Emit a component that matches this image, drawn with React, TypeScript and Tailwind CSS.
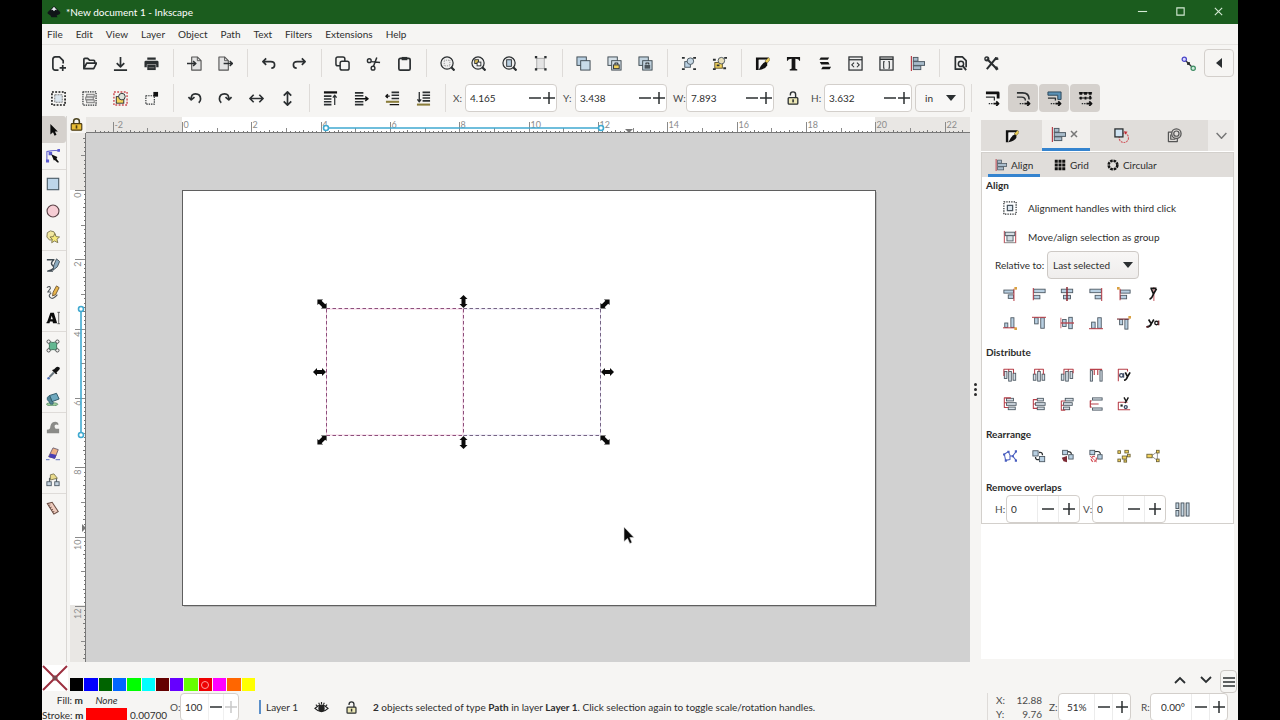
import React from "react";

const DARK = "#2b2f31";
const EDGE = "#4a5660";
const BLUE = "#b9d0e2";
const RED = "#b8404a";
const GOLD = "#f3d35c";

type Box = [number, number, number, number];

function Boxes({ at, fill = BLUE, stroke = EDGE }: { at: Box[]; fill?: string; stroke?: string }) {
  return (
    <>
      {at.map(([x, y, w, h], i) => (
        <rect key={i} x={x} y={y} width={w} height={h} fill={fill} stroke={stroke} strokeWidth="1" />
      ))}
    </>
  );
}

function L({ d, c = DARK, w = 1.8, f = "none", dash }: { d: string; c?: string; w?: number; f?: string; dash?: string }) {
  return <path d={d} stroke={c} strokeWidth={w} fill={f} strokeDasharray={dash} strokeLinejoin="round" />;
}

const frameDots = "M1 1H15V15H1Z";

const icons: Record<string, React.ReactNode> = {
  new: <L d="M8 15H4.5Q2 15 2 12.5V3.500Q2 1 4.500 1H9L13 5V8M12.500 9.500V16M9.200 12.700H16" />,
  open: <L d="M2 13V3.500Q2 2.500 3 2.500H6L8 4.500H12.500Q13.500 4.500 13.500 5.500V7M2 13.500L5 7.500H15.500L12.500 13.500Z" />,
  save: <L d="M8 1V11M4 7.500L8 11.500L12 7.500M1 15H15" />,
  print: (
    <>
      <path d="M3.500 1.500H12.500V4H3.500ZM2 5H14Q15.500 5 15.500 6.500V12H13V9H3V12H.500V6.500Q.500 5 2 5Z" fill={DARK} />
      <path d="M3.500 9.500H12.500V15H3.500Z" fill={DARK} />
      <path d="M5 12.500H11" stroke="#777" />
    </>
  ),
  importDoc: (
    <>
      <L d="M5 1H11L15 5V15H5Z" w={1.2} c="#555" f="#e4e4e4" />
      <L d="M11 1V5H15" w={1} c="#555" />
      <L d="M0 8H9M6.500 5.500L9.500 8L6.500 10.500" w={1.5} />
    </>
  ),
  exportDoc: (
    <>
      <L d="M1 1H7L11 5V15H1Z" w={1.2} c="#555" f="#e4e4e4" />
      <L d="M7 1V5H11" w={1} c="#555" />
      <L d="M6 8H15M12.500 5.500L15.500 8L12.500 10.500" w={1.5} />
    </>
  ),
  undo: <L d="M5.500 2.500L2 6L5.500 9.500M2 6H10.500Q14.500 6 14.500 9.500T11 13" />,
  redo: <L d="M10.500 2.500L14 6L10.500 9.500M14 6H5.500Q1.500 6 1.500 9.500T5 13" />,
  copy: (
    <>
      <rect x="1" y="1" width="9.500" height="9.500" rx="2" fill="none" stroke={DARK} strokeWidth="1.600" />
      <rect x="5.500" y="5.500" width="9.500" height="9.500" rx="2" fill="#f6f5f4" stroke={DARK} strokeWidth="1.600" />
    </>
  ),
  cut: (
    <>
      <circle cx="3.500" cy="5" r="2" fill="none" stroke={DARK} strokeWidth="1.500" />
      <circle cx="7.500" cy="13" r="2" fill="none" stroke={DARK} strokeWidth="1.500" />
      <L d="M5.500 6L15 7M8 11L11.500 1.500" w={1.600} />
    </>
  ),
  paste: (
    <>
      <rect x="2" y="2.500" width="12" height="12.500" rx="1.500" fill="none" stroke={DARK} strokeWidth="1.800" />
      <rect x="5" y="1" width="6" height="3.500" fill={DARK} />
    </>
  ),
  zoomSel: (
    <>
      <circle cx="7.500" cy="7.500" r="6.500" fill="#eee" stroke={DARK} strokeWidth="1.300" />
      <L d="M4.500 4.500H10.500V10.500H4.500Z" w={0.8} c="#777" dash="1 1" />
      <L d="M12 12L15.500 15.500" w={2.400} />
    </>
  ),
  zoomDraw: (
    <>
      <circle cx="7.500" cy="7.500" r="6.500" fill="#eee" stroke={DARK} strokeWidth="1.300" />
      <Boxes at={[[4, 4, 4, 4]]} fill={GOLD} stroke={DARK} />
      <Boxes at={[[6.500, 6.500, 4, 4]]} fill="#fff" stroke={DARK} />
      <L d="M12 12L15.500 15.500" w={2.400} />
    </>
  ),
  zoomPage: (
    <>
      <circle cx="7.500" cy="7.500" r="6.500" fill="#eee" stroke={DARK} strokeWidth="1.300" />
      <Boxes at={[[5, 4, 5, 7]]} fill={BLUE} stroke={DARK} />
      <L d="M12 12L15.500 15.500" w={2.400} />
    </>
  ),
  zoomCenter: (
    <>
      <rect x="4" y="2.500" width="8" height="11" fill="#e4e4e4" stroke="#aaa" />
      {[[2, 0], [12, 0], [2, 13], [12, 13]].map(([x, y]) => (
        <rect key={`${x}${y}`} x={x} y={y} width="2.500" height="2.500" fill={DARK} />
      ))}
    </>
  ),
  duplicate: (
    <>
      <Boxes at={[[1, 1, 10, 9]]} stroke="#3c4850" />
      <Boxes at={[[5, 5, 10, 10]]} stroke="#3c4850" fill="#c8dbe8" />
    </>
  ),
  clone: (
    <>
      <Boxes at={[[1, 1, 10, 9], [5, 5, 10, 10]]} stroke="#3c4850" fill="#d5e0e8" />
      <rect x="7" y="9.500" width="6" height="4" fill={GOLD} stroke={DARK} />
      <L d="M8.500 9V7.500H11.500V9" w={1.200} />
    </>
  ),
  unlinkClone: (
    <>
      <Boxes at={[[1, 1, 10, 9], [5, 5, 10, 10]]} stroke="#3c4850" fill="#c2d3df" />
      <rect x="7" y="9.500" width="6" height="4" fill="#4b555c" />
      <L d="M8.500 9V7.500H11.500V9" w={1.200} />
    </>
  ),
  group: (
    <>
      <Boxes at={[[4, 6, 6, 6]]} />
      <circle cx="10" cy="5.500" r="3.500" fill="#c5d7e4" stroke={EDGE} />
      <path d="M1 1h3v2h-3zM13 1h3v2h-3zM1 13h3v2h-3zM13 13h3v2h-3z" fill={DARK} />
    </>
  ),
  ungroup: (
    <>
      <Boxes at={[[3, 7, 8, 6]]} fill={GOLD} stroke="#5f522a" />
      <circle cx="10" cy="5" r="3.500" fill="#e8dfba" stroke={EDGE} />
      <path d="M1 3h3v2h-3zM13 1h3v2h-3zM1 13h3v2h-3zM12 12h3v2h-3zM5 9h3v2h-3z" fill={DARK} />
    </>
  ),
  fillStroke: (
    <>
      <path d="M1 1.500H14V4H1ZM1 1.500H4V15H1Z" fill="#111" />
      <path d="M4 4H12L4 14.500Z" fill="#f4f4f4" />
      <path d="M13 5L13 10Q11 14 4 15Q6 10 9 7.500Z" fill="#111" />
      <path d="M10.500 5.500L14.500 1.500L16 4L13 7.500Z" fill="#e9cc58" stroke="#5c5230" strokeWidth=".6" />
    </>
  ),
  text: <path d="M1 1H15V5H14Q13.500 3 10 3V13Q10 14 12 14V15.500H4V14Q6 14 6 13V3Q2.500 3 2 5H1Z" fill="#151515" />,
  layers: <path d="M4 1.500H13L11.500 4H2.500ZM3 6.500H12L13.500 9H4.500ZM6 11.500H15L13.500 14H4.500Z" fill="#151515" />,
  xml: (
    <>
      <rect x="1" y="1" width="14" height="14" fill="#eee" stroke={DARK} strokeWidth="1.300" />
      <path d="M1 4H15" stroke={DARK} strokeWidth="1.300" />
      <L d="M6.500 7L4 9.500L6.500 12M9.500 7L12 9.500L9.500 12" w={1.100} />
    </>
  ),
  selectors: (
    <>
      <rect x="1" y="1" width="14" height="14" fill="#eee" stroke={DARK} strokeWidth="1.300" />
      <path d="M1 3.500H15" stroke={DARK} strokeWidth="1.600" />
      <L d="M6 6H5V13H6M10 6H11V13H10" w={1.100} />
    </>
  ),
  align: (
    <>
      <path d="M1.500 0V16" stroke={RED} strokeWidth="1.300" />
      <Boxes at={[[3.500, 1.500, 5, 4], [3.500, 6, 12, 4], [3.500, 10.500, 8, 4]]} fill="#a9bccb" />
    </>
  ),
  docProps: (
    <>
      <L d="M10 14H2.500V1H10L14 5V12" w={1.800} />
      <circle cx="8.500" cy="8.500" r="2.800" fill="#f6f5f4" stroke={DARK} strokeWidth="1.600" />
      <L d="M10 10L14 15" w={2} />
    </>
  ),
  prefs: (
    <>
      <L d="M3 3L13.500 13.500M13 2L3 14" w={2.200} />
      <circle cx="3" cy="3" r="2" fill="none" stroke={DARK} strokeWidth="1.500" />
      <path d="M11 4.500L12 1L15 1.500L15.500 4ZM11 12L14 11L15.500 14L13 15.500Z" fill={DARK} />
    </>
  ),
  snap: (
    <>
      <L d="M4 4L12.500 12.500" w={1.300} />
      <circle cx="3.500" cy="3.500" r="2.300" fill="#dcdcff" stroke="#4a45c8" strokeWidth="1.300" />
      <circle cx="13" cy="13" r="2.300" fill="#cfeedd" stroke="#3d8b62" strokeWidth="1.300" />
      <rect x="6.500" y="6.500" width="3" height="3" fill={DARK} />
    </>
  ),
  selectAll: (
    <>
      <L d={frameDots} w={1.700} c="#151515" dash="2 1.500" />
      <rect x="4" y="4" width="8" height="8" fill="#dce6ee" stroke="#777" strokeDasharray="2 1" />
    </>
  ),
  selectLayers: (
    <>
      <L d={frameDots} w={1.300} dash="1.500 1" />
      <Boxes at={[[5, 3.500, 8, 3], [4, 6.500, 8, 3], [5, 9.500, 8, 3]]} fill="#e2e2e2" stroke="#777" />
    </>
  ),
  deselect: (
    <>
      <L d={frameDots} w={1.500} c="#cc4a50" dash="2 1.500" />
      <Boxes at={[[3.500, 6, 8, 7]]} fill={GOLD} stroke={DARK} />
      <circle cx="9.500" cy="6" r="3.500" fill="#dfe4dd" stroke={DARK} />
    </>
  ),
  touch: (
    <>
      <L d="M2 5H11V14H2Z" w={1.200} dash="1.500 1" />
      <rect x="10" y="1" width="5" height="5" fill="#111" />
    </>
  ),
  rotL: <L d="M1.500 6.500L4.500 9.500L8 6.500M4.500 9.500Q4 3 9 3Q14.500 3 14.500 8.500Q14.500 11 12.500 12.500" />,
  rotR: <L d="M14.500 6.500L11.500 9.500L8 6.500M11.500 9.500Q12 3 7 3Q1.500 3 1.500 8.500Q1.500 11 3.500 12.500" />,
  flipH: <L d="M1.500 8H14.500M5 4L1 8L5 12M11 4L15 8L11 12" />,
  flipV: <L d="M8 1.500V14.500M4 5L8 1L12 5M4 11L8 15L12 11" />,
  toTop: (
    <>
      <L d="M1 1.500H15" w={2.400} c="#111" />
      <L d="M1 5.500H9M1 8.500H9M1 11.500H9M1 14.500H9" w={1.700} />
      <L d="M12.500 15V5M10.500 7L12.500 4.500L14.500 7" w={1.300} />
    </>
  ),
  raise: (
    <>
      <L d="M1 2H10M1 5H10M1 11.500H10M1 14.500H10" w={1.700} />
      <L d="M1 8.300H15M12 6L15 8.300L12 10.500" w={1.500} c="#111" />
    </>
  ),
  lower: (
    <>
      <L d="M7 1.500H15M7 4.500H15M7 8H15" w={1.700} />
      <L d="M1 11.500H15" w={2.200} c="#8a7d3a" />
      <L d="M5 14.500H15M5 5.500H1M3 3.500L1 5.500L3 7.500" w={1.500} c="#111" />
    </>
  ),
  toBottom: (
    <>
      <L d="M7 1.500H15M7 4.500H15M7 7.500H15M7 10.500H15" w={1.700} />
      <L d="M1 14.500H15" w={2.200} c="#8a7d3a" />
      <L d="M3.500 1V11M1.500 9L3.500 11.500L5.500 9" w={1.400} />
    </>
  ),
  lockOpen: (
    <>
      <rect x="2.500" y="7.500" width="11" height="7.500" rx="1" fill="#ece7b4" stroke={DARK} strokeWidth="1.500" />
      <L d="M5 5V4Q5 1 8 1T11 4V7.500" w={1.600} />
      <rect x="7.200" y="9.500" width="1.800" height="3.500" fill={DARK} />
    </>
  ),
  lock: (
    <>
      <L d="M4.500 7V4Q4.500 1 8 1T11.500 4V7" w={1.900} c="#4b431f" />
      <rect x="1.500" y="7" width="13" height="8" rx="1" fill="#e9bd35" stroke="#4b3b12" strokeWidth="1.400" />
      <path d="M8 9V13" stroke="#4b3b12" strokeWidth="2" />
    </>
  ),
  scaleStroke: (
    <>
      <L d="M1 2H14V8" w={3} c="#111" />
      <L d="M1 6.500H10V10" w={1.300} />
      <L d="M4 13.500H9" w={1.500} dash="1.500 1" />
      <L d="M9 13.500H14M12 11L14.500 13.500L12 16" w={1.700} c="#111" />
    </>
  ),
  scaleRadii: (
    <>
      <L d="M1 2H7Q14 2 14 9" w={1.700} />
      <L d="M1 6.500H6Q10 6.500 10 10" w={1.500} />
      <L d="M4 13.500H9" w={1.500} dash="1.500 1" />
      <L d="M9 13.500H14M12 11L14.500 13.500L12 16" w={1.700} c="#111" />
    </>
  ),
  scaleGradient: (
    <>
      <path d="M1 1H15V9H11.500V4.500H1Z" fill="#5b91b5" stroke="#2b4558" />
      <L d="M1 7.500H9V10" w={1.400} />
      <L d="M4 13.500H9" w={1.500} dash="1.500 1" />
      <L d="M9 13.500H14M12 11L14.500 13.500L12 16" w={1.700} c="#111" />
    </>
  ),
  scalePattern: (
    <>
      <path d="M1 2H15M1 7.500H15" stroke="#111" strokeWidth="1.200" />
      <path d="M1.500 1h3v3h-3zM6.500 1h3v3h-3zM11.500 1h3v3h-3zM2 6h2v3h-2zM7 6h2v3h-2zM12 5v4h2v-4z" fill="#111" />
      <L d="M4 13.500H9" w={1.500} dash="1.500 1" />
      <L d="M9 13.500H14M12 11L14.500 13.500L12 16" w={1.700} c="#111" />
    </>
  ),
  pointer: <path d="M5 1V13L8 10.500L9.800 14.500L12 13.500L10.200 9.800H13.500Z" fill="#0b0b0b" />,
  node: (
    <>
      <L d="M1 14V3Q8 1 15 2" w={1.300} c="#6a6ad0" />
      <path d="M0 12h3.500v3.500H0zM3 3h4v4H3zM13 0h3v3h-3z" fill="#5b5bd0" />
      <path d="M6 6L13 9L12 11L15 15L13 15.500L10 12.500L9 13Z" fill="#0b0b0b" />
    </>
  ),
  rect: <rect x="1.500" y="1.500" width="13" height="13" fill="#bdd6ea" stroke="#4d5d69" strokeWidth="1.300" />,
  ellipse: <circle cx="8" cy="8" r="6.800" fill="#f6cdd4" stroke="#5c4449" strokeWidth="1.300" />,
  star: (
    <>
      <path d="M5 1L9 2L11 6L9 11L4 11.500L1 8L1.500 3Z" fill="#f2e8a0" stroke="#77704a" />
      <path d="M10 4L11.500 7.500L15.500 8L12.500 10.500L13.500 14.500L9.800 12.500L6.500 14.500L7.200 10.500L4.500 8L8.500 7.500Z" fill="#f7ea7c" stroke="#77704a" />
    </>
  ),
  pen: (
    <>
      <L d="M1 2H9Q4 6 8 9T2 15H8" w={1.700} c="#3f4a52" />
      <path d="M12 1L15.500 4L13 10L8 14L9 8Z" fill="#8cabc0" stroke="#3f4a52" />
    </>
  ),
  pencil: (
    <>
      <L d="M1 3Q5 0 5 4L2 8H5.500M6 9Q2 12 5 14.500T13 11" w={1.300} c="#50565a" />
      <path d="M12 1L15 3L11 11L7.500 12.500L8 8.500Z" fill="#e9b64c" stroke="#6a5230" />
    </>
  ),
  textTool: (
    <>
      <path d="M5 2H9L12.500 13V14H8L7.500 12H4.500L4 14H.500V13L1.500 12ZM6.500 5.500L5.300 9.500H7.800Z" fill="#0b0b0b" fillRule="evenodd" />
      <L d="M13 1.500H16M14.500 1.500V14.500M13 14.500H16" w={0.9} c="#444" />
    </>
  ),
  mesh: (
    <>
      <path d="M3 3Q8 5 13 3Q11 8 13 13Q8 11 3 13Q5 8 3 3Z" fill="#63b791" stroke="#356d53" />
      {[[3, 3], [13, 3], [3, 13], [13, 13]].map(([x, y]) => (
        <circle key={`${x}-${y}`} cx={x} cy={y} r="1.900" fill="#f2f2f2" stroke="#444" />
      ))}
    </>
  ),
  dropper: (
    <>
      <path d="M9 4L11 2Q13 0 15 1.500T14 5.500L12 7.500L13 8.500L11.500 9.500L7 5L8 4Z" fill="#111" />
      <L d="M9 7.500L4 12.500" w={2.400} c="#6c7880" />
      <circle cx="3" cy="14" r="1.500" fill="#4f6fb0" />
    </>
  ),
  bucket: (
    <>
      <ellipse cx="7" cy="14" rx="6.500" ry="1.800" fill="#9fcf9a" stroke="#5c8f6a" />
      <path d="M4 4L12 1.500L15 8L7 11Z" fill="#6fa9bf" stroke="#27505f" />
      <path d="M4 4Q0 6 1.500 9Q4 11 5 14H8Q9 12 7 11L4 4Z" fill="#4f8596" stroke="#27505f" strokeWidth=".7" />
    </>
  ),
  tweak: <path d="M1 15V11Q5 11 5 7Q6 2 11 2Q15 3 14 6Q12 4 10 6Q9 9 11 10H15V15Z" fill="#8b8b88" />,
  eraser: (
    <>
      <path d="M8 1L14 3L10 13L3 11Z" fill="#eeb187" stroke="#6a5a6c" />
      <path d="M5 7.500L12 9L10 13.500L3 11.500Z" fill="#4a3fb5" />
      <L d="M0 14.500H4M11 14.500H16" w={1} c="#4a5fb5" />
    </>
  ),
  connector: (
    <>
      <L d="M4 11V6H12V11" w={1.300} c="#5b646b" />
      <path d="M5 2L9 1L13 6L5 8Z" fill="#eadb8b" stroke="#7c7650" />
      <Boxes at={[[1, 10, 5, 4.5], [10, 10, 5, 4.5]]} fill="#c4d3df" />
    </>
  ),
  measure: (
    <>
      <path d="M1.500 3L7 1.500L14 12L9 15Z" fill="#f0cdbf" stroke="#6c4f45" strokeWidth="1.200" />
      <L d="M3 5L5 4.500M4.500 7.500L6.500 7M6 10L8 9.500M7.500 12.500L9.500 12" w={1} c="#6c4f45" />
    </>
  ),
  transform: (
    <>
      <circle cx="10.500" cy="10.500" r="5" fill="none" stroke="#d05a60" strokeWidth="1.300" strokeDasharray="2 1" />
      <rect x="1" y="1" width="8.500" height="8.500" fill="#cfe2f1" stroke={DARK} strokeWidth="1.400" />
      <path d="M10.500 3.500L14.500 4L12 7Z" fill="#c02b35" />
    </>
  ),
  offset: (
    <>
      <circle cx="10" cy="6" r="5" fill="none" stroke="#555" strokeWidth="1.400" />
      <circle cx="10" cy="6" r="2.800" fill="none" stroke="#555" strokeWidth="1.300" />
      <L d="M5 4.500H1.500V14.500H11V11M4 7V12H9" w={1.300} c="#555" />
    </>
  ),
  chevDown: <L d="M2 5L8 11.500L14 5" w={1.800} c="#777" />,
  grid: <path d="M1 1h4v4H1zM6 1h4v4H6zM11 1h4v4h-4zM1 6h4v4H1zM6 6h4v4H6zM11 6h4v4h-4zM1 11h4v4H1zM6 11h4v4H6zM11 11h4v4h-4z" fill="#111" />,
  circular: <circle cx="8" cy="8" r="5.800" fill="none" stroke="#151515" strokeWidth="3.400" strokeDasharray="3.450 1.100" />,
  handles: (
    <>
      <L d={frameDots} w={1.400} dash="1.500 1.300" />
      <rect x="5" y="5" width="6" height="6" fill="#dce6ee" stroke={EDGE} strokeWidth="1.400" />
    </>
  ),
  asGroup: (
    <>
      <L d="M1.500 1V15M14.500 1V15" w={1.100} c={RED} />
      <Boxes at={[[2.500, 2.500, 11, 4], [4.500, 6.500, 7, 6]]} fill="#d5dde3" />
      <L d="M2 14.500H14" w={1} c="#777" />
    </>
  ),
  aRightOut: (
    <>
      <Boxes at={[[1, 3.500, 11, 3.500], [6, 9, 6, 4]]} />
      <L d="M12.500 2V16" w={1.200} c={RED} />
      <rect x="13" y="0" width="3" height="3" fill="#d9a040" />
    </>
  ),
  aLeft: (
    <>
      <Boxes at={[[2, 2.500, 13, 4], [2, 9.500, 7, 4]]} />
      <L d="M1.500 1V15" w={1.200} c={RED} />
    </>
  ),
  aCenterV: (
    <>
      <Boxes at={[[1.500, 2.500, 13, 4], [4, 9.500, 8, 4]]} />
      <L d="M8 0V16" w={1.700} c="#8b2530" />
    </>
  ),
  aRight: (
    <>
      <Boxes at={[[1, 2.500, 13, 4], [7, 9.500, 7, 4]]} />
      <L d="M14.500 1V16" w={1.200} c={RED} />
    </>
  ),
  aLeftOut: (
    <>
      <Boxes at={[[4, 3.500, 11, 3.500], [4, 9.500, 7, 4]]} />
      <L d="M3.500 2V15" w={1.200} c={RED} />
      <rect x="0" y="0" width="3" height="3" fill="#d9a040" />
    </>
  ),
  aTextV: (
    <>
      <L d="M9 0V16" w={1} c={RED} />
      <L d="M6 2L8.500 8L12 2M8.500 8Q7 13 4 14M5 1.500H12" w={1.900} c="#171717" />
    </>
  ),
  aTopOut: (
    <>
      <Boxes at={[[2, 8, 3.500, 5], [9, 2, 3.500, 11]]} />
      <L d="M0 13.500H14" w={1.200} c={RED} />
      <rect x="13" y="13" width="3" height="3" fill="#d9a040" />
    </>
  ),
  aTop: (
    <>
      <Boxes at={[[3, 2, 4, 7], [10, 2, 4, 12]]} />
      <L d="M0 1.500H16" w={1.200} c={RED} />
    </>
  ),
  aMiddle: (
    <>
      <Boxes at={[[3, 4, 4, 8], [10, 1.500, 4, 13]]} />
      <L d="M1 8H16" w={1.500} c={RED} />
      <L d="M1 2V14" w={0.900} c={RED} />
    </>
  ),
  aBottom: (
    <>
      <Boxes at={[[3, 7, 4, 7], [10, 2, 4, 12]]} />
      <L d="M0 14.500H16" w={1.200} c={RED} />
    </>
  ),
  aBottomOut: (
    <>
      <Boxes at={[[3, 4, 3.500, 6], [9, 4, 3.500, 11]]} />
      <L d="M0 3.500H14" w={1.300} c="#7b3138" />
      <rect x="13" y="0" width="3" height="3" fill="#d9a040" />
    </>
  ),
  aTextH: (
    <>
      <L d="M3 4L6 9L9 4M6 9Q5 12 1 12.500" w={1.900} c="#171717" />
      <circle cx="12" cy="8" r="2" fill="none" stroke="#171717" strokeWidth="1.500" />
      <L d="M14.500 5V10.500M0 12.500H3" w={1.500} c="#6a2a30" />
    </>
  ),
  dLeft: (
    <>
      <Boxes at={[[1.500, 4, 3, 8], [6.500, 4, 3, 11], [11.500, 6, 3, 8]]} fill="#d6dfe6" />
      <L d="M1 9V1.500H12V6M6.500 1.500V4" w={1.200} c={RED} />
    </>
  ),
  dCenter: (
    <>
      <Boxes at={[[1.500, 7, 3, 7], [6.500, 4, 3, 11], [11.500, 7, 3, 7]]} fill="#d6dfe6" />
      <L d="M3 7V1.500H13V7M8 1.500V4" w={1.200} c={RED} />
    </>
  ),
  dRight: (
    <>
      <Boxes at={[[1.500, 7, 3, 7], [6.500, 4, 3, 11], [11.500, 4, 3, 8]]} fill="#d6dfe6" />
      <L d="M4.500 7V1.500H15V6M9.500 1.500V4" w={1.200} c={RED} />
    </>
  ),
  dGapH: (
    <>
      <Boxes at={[[1.500, 3, 2.500, 12], [12.500, 3, 2.500, 12]]} fill="#d6dfe6" />
      <L d="M1 1.500H15M6 2V8M10 2V8" w={1.300} c={RED} />
    </>
  ),
  dTextH: (
    <>
      <L d="M1.500 15V1.500H12V4" w={1.200} c={RED} />
      <circle cx="5" cy="8.500" r="2" fill="none" stroke="#3d4a63" strokeWidth="1.500" />
      <L d="M7.500 6V11" w={1.500} c="#3d4a63" />
      <L d="M9.500 5L12 10L15 5M12 10Q11 13.500 8 14" w={1.900} c="#171717" />
    </>
  ),
  dTop: (
    <>
      <Boxes at={[[4, 1.500, 8, 3], [4, 6.500, 11, 3], [6, 11.500, 8, 3]]} fill="#d6dfe6" />
      <L d="M9 1H1.500V12H6M1.500 6.500H4" w={1.200} c={RED} />
    </>
  ),
  dMiddle: (
    <>
      <Boxes at={[[6, 1.500, 7, 3], [4, 6.500, 11, 3], [6, 11.500, 8, 3]]} fill="#d6dfe6" />
      <L d="M6 3H1.500V13H6M1.500 8H4" w={1.200} c={RED} />
    </>
  ),
  dBottom: (
    <>
      <Boxes at={[[6, 1.500, 9, 3], [4, 6.500, 10, 3], [4, 11.500, 7, 3]]} fill="#d6dfe6" />
      <L d="M6 4.500H1.500V15H6M1.500 9.500H4" w={1.200} c={RED} />
    </>
  ),
  dGapV: (
    <>
      <Boxes at={[[4, 1, 11, 2.500], [4, 12.500, 11, 2.500]]} fill="#d6dfe6" />
      <L d="M3 4.500H1.500V11.500H3M2 8H11" w={1.400} c={RED} />
    </>
  ),
  dTextV: (
    <>
      <L d="M12 6H1.500V14.500H15" w={1.200} c={RED} />
      <L d="M8 .500L10.500 5L13 .500M10.500 5L9 7" w={1.600} c="#171717" />
      <circle cx="10" cy="11.500" r="1.700" fill="none" stroke="#3d4a63" strokeWidth="1.500" />
      <rect x="4" y="8.500" width="2.500" height="2.500" fill="#222" />
    </>
  ),
  rGraph: (
    <>
      <L d="M3 13L1.500 6L6 3L8 7V12L3 13M8 8H11L15 3M11 8L15 13" w={1.200} c="#4a5fc0" />
      <path d="M0 5h2.500v2.500H0zM2 12h2.500v2.500H2zM13.500 1.500h2.500v2.500h-2.500zM13.500 12h2.500v2.500h-2.500zM5 2h2.500v2.500H5zM10 7h2.500v2.500h-2.500z" fill="#4a5fc0" />
    </>
  ),
  rSwap: (
    <>
      <Boxes at={[[1, 2, 6, 6], [8.500, 8.500, 6, 6]]} />
      <L d="M8 4Q12 3 12 7M8 12Q4 13 4 9" w={1.500} />
    </>
  ),
  rSwapZ: (
    <>
      <Boxes at={[[3, 1.500, 5.500, 5], [10, 6.500, 5, 5]]} />
      <L d="M9 3Q13 3 13 6" w={1.300} />
      <path d="M2 10L8 8V15L4 14Z" fill="#7d2b35" />
    </>
  ),
  rSwapC: (
    <>
      <Boxes at={[[1, 1.500, 5.500, 5], [10, 6.500, 5, 5]]} />
      <L d="M7 3Q13 2 13 6" w={1.300} />
      <circle cx="5.500" cy="11.500" r="3" fill="none" stroke="#d4545c" strokeWidth="1.400" strokeDasharray="4 1.500" />
      <L d="M1 8L9 15" w={1} c="#d4545c" />
    </>
  ),
  rRandom: <Boxes at={[[1, 2, 3, 3], [9, 1.500, 4, 3], [12, 6, 3, 3], [6, 8, 5, 3.500], [1, 11.500, 3, 3], [8, 12.500, 3, 2.500]]} fill={GOLD} stroke="#6c6238" />,
  rUnclump: (
    <>
      <L d="M6 8L13 3M6 8L13 13M13 3V13" w={1} c="#888" />
      <Boxes at={[[1, 6, 6, 4], [12, 1.500, 3, 3], [12, 11.500, 3, 3]]} fill={GOLD} stroke="#6c6238" />
    </>
  ),
  overlaps: (
    <>
      <Boxes at={[[1, 1, 3, 6], [1, 9, 3, 6], [6.500, 1, 3, 14], [12, 1, 3, 14]]} fill="#c4d6e2" />
      <L d="M5.200 1V15M10.800 1V15" w={0.600} c="#888" />
    </>
  ),
  eye: (
    <>
      <path d="M1 9Q8 2 15 9Q8 16 1 9Z" fill="#f4f4f4" stroke="#222" strokeWidth="1.300" />
      <circle cx="8" cy="9" r="3.400" fill="#222" />
      <L d="M2 5L3.500 6.500M5 3L6 5M8 2V4.500M11 3L10 5M14 5L12.500 6.500" w={1.200} c="#222" />
    </>
  ),
};

function Icon({ name, className = "size-[15px]" }: { name: string; className?: string }) {
  return (
    <svg viewBox="0 0 16 16" className={`${className} shrink-0`} aria-hidden="true">
      {icons[name]}
    </svg>
  );
}

const commandGroups = [
  ["new", "open", "save", "print"],
  ["importDoc", "exportDoc"],
  ["undo", "redo"],
  ["copy", "cut", "paste"],
  ["zoomSel", "zoomDraw", "zoomPage", "zoomCenter"],
  ["duplicate", "clone", "unlinkClone"],
  ["group", "ungroup"],
  ["fillStroke", "text", "layers", "xml", "selectors", "align"],
  ["docProps", "prefs"],
];

const controlGroups = [
  ["selectAll", "selectLayers", "deselect", "touch"],
  ["rotL", "rotR", "flipH", "flipV"],
  ["toTop", "raise", "lower", "toBottom"],
];

function ToolbarGroups({ groups }: { groups: string[][] }) {
  return (
    <>
      {groups.map((group, i) => (
        <React.Fragment key={i}>
          {i > 0 && <Divider />}
          {group.map((name) => (
            <button key={name} aria-label={name} className="flex h-7 w-[31px] shrink-0 items-center justify-center">
              <Icon name={name} />
            </button>
          ))}
        </React.Fragment>
      ))}
    </>
  );
}

function Divider() {
  return (
    <div className="flex w-3 shrink-0 justify-center">
      <div className="h-7 w-px bg-[#dedbd8]" />
    </div>
  );
}

function Spin({
  id,
  label,
  value,
  width,
  button,
  input = "pl-1",
  split = "",
  labelWidth = "w-3",
  plus = DARK,
}: {
  id: string;
  label: string;
  value: string;
  width: string;
  button: string;
  input?: string;
  split?: string;
  labelWidth?: string;
  plus?: string;
}) {
  return (
    <div className="flex shrink-0 items-center">
      <label htmlFor={id} className={`shrink-0 whitespace-nowrap text-[#4b4b4b] ${labelWidth}`}>
        {label}:
      </label>
      <div className={`flex h-[28px] overflow-hidden rounded-[4px] border border-[#d3cfcb] bg-white ${width}`}>
        <input id={id} defaultValue={value} className={`w-0 min-w-0 flex-1 bg-transparent outline-none ${input}`} />
        <button aria-label={`Decrease ${label}`} className={`flex items-center justify-center ${button} ${split}`}>
          <svg viewBox="0 0 12 12" className="size-3">
            <path d="M0 6H12" stroke={DARK} strokeWidth="1.500" />
          </svg>
        </button>
        <button aria-label={`Increase ${label}`} className={`flex items-center justify-center ${button} ${split}`}>
          <svg viewBox="0 0 12 12" className="size-3">
            <path d="M0 6H12M6 0V12" stroke={plus} strokeWidth="1.500" />
          </svg>
        </button>
      </div>
    </div>
  );
}

const UNIT = 34.66;

function Ruler({ vertical = false, origin, pageEnd, from, to, selection, marker }: {
  vertical?: boolean;
  origin: number;
  pageEnd: number;
  from: number;
  to: number;
  selection: [number, number];
  marker: number;
}) {
  const ticks: React.ReactNode[] = [];
  for (let n = from * 8; n <= to * 8; n++) {
    const p = Math.round(origin + (n / 8) * UNIT) + 0.5;
    const len = n % 16 === 0 ? 11 : n % 8 === 0 ? 5 : n % 4 === 0 ? 3 : 2;
    ticks.push(
      <path
        key={n}
        d={vertical ? `M16 ${p}H${16 - len}` : `M${p} 16V${16 - len}`}
        stroke={len > 3 ? "#8a8a8a" : "#777"}
        strokeWidth="1"
      />,
    );
    if (n % 16 === 0) {
      const text = String(n / 8);
      ticks.push(
        vertical ? (
          <text key={`t${n}`} transform={`translate(11 ${p + 2}) rotate(-90)`} textAnchor="end" fontSize="9" fill="#8c8c8c">
            {text}
          </text>
        ) : (
          <text key={`t${n}`} x={p + 1} y="11" fontSize="9" fill="#8c8c8c">
            {text}
          </text>
        ),
      );
    }
  }
  const [a, b] = selection;
  return (
    <svg className="block size-full" aria-hidden="true">
      <rect width="100%" height="100%" fill="#e9e7e4" />
      {vertical ? (
        <rect y={origin} width="16" height={pageEnd - origin} fill="#fff" />
      ) : (
        <rect x={origin} width={pageEnd - origin} height="16" fill="#fff" />
      )}
      {ticks}
      <path d={vertical ? "M15.500 0V2000" : "M0 15.500H3000"} stroke="#777" />
      <g stroke="#3fa9d0" strokeWidth="1.600" fill="#fff">
        <path d={vertical ? `M11 ${a}V${b}` : `M${a} 11H${b}`} />
        <circle cx={vertical ? 11 : a} cy={vertical ? a : 11} r="2.500" />
        <circle cx={vertical ? 11 : b} cy={vertical ? b : 11} r="2.500" />
      </g>
      <path
        d={vertical ? `M12 ${marker - 4}V${marker + 4}L16 ${marker}Z` : `M${marker - 4} 12H${marker + 4}L${marker} 16Z`}
        fill="#777"
      />
    </svg>
  );
}

const ARROW = "M0-6.500L4-2.500H2V2.500H4L0 6.500L-4 2.500H-2V-2.500H-4Z";
const handles = [
  [236, 171, -45], [377.5, 168.5, 0], [519, 171, 45],
  [233.500, 239, 90], [521.5, 239, 90],
  [236, 307, 45], [377.5, 309.5, 0], [519, 307, -45],
];

function Canvas() {
  return (
    <svg className="block size-full" role="img" aria-label="Drawing canvas">
      <rect width="100%" height="100%" fill="#d1d1d1" />
      <rect x="98" y="59" width="693" height="415" fill="#b5b5b5" />
      <rect x="96.500" y="57.500" width="693" height="415" fill="#fff" stroke="#5f5f5f" />
      <path d="M240.500 176H377V302H240.500Z" fill="none" stroke="#f3cfe2" />
      <path d="M377 176H514.500V302H377" fill="none" stroke="#e6e0f2" />
      <path d="M240.500 175.500H377.500M240.500 302.500H377.500M240.500 176V302M377.500 176V302" stroke="#8d4f7c" strokeDasharray="3.500 2.500" />
      <path d="M377.500 175.500H514.500M377.500 302.500H514.500M514.500 176V302" stroke="#756484" strokeDasharray="3.500 2.500" />
      {handles.map(([x, y, r], i) => (
        <path key={i} d={ARROW} transform={`translate(${x} ${y}) rotate(${r})`} fill="#0a0a0a" />
      ))}
      <path d="M538 394V408.500L541.500 405.500L543.800 410.500L546 409.500L543.800 404.500H548Z" fill="#0a0a0a" stroke="#ddd" strokeWidth=".6" />
    </svg>
  );
}

const toolGroups = [
  ["pointer", "node"],
  ["rect", "ellipse", "star"],
  ["pen", "pencil", "textTool"],
  ["mesh", "dropper", "bucket"],
  ["tweak", "eraser", "connector"],
  ["measure"],
];

function Toolbox() {
  return (
    <div className="flex w-[25px] shrink-0 flex-col border-r border-[#d9d6d3]">
      {toolGroups.map((group, i) => (
        <div key={i} className="flex flex-col">
          {group.map((name, j) => (
            <button
              key={name}
              aria-label={name}
              className={`flex h-[27px] items-center justify-center pr-0.5 ${name === "pointer" ? "rounded-r-[3px] bg-[#d5d1cd]" : ""} ${
                j === group.length - 1 && i < 5 ? "border-b border-[#dedbd8]" : ""
              }`}
            >
              <Icon name={name} className="size-[14px]" />
            </button>
          ))}
        </div>
      ))}
    </div>
  );
}

function Heading({ children, className = "" }: { children: React.ReactNode; className?: string }) {
  return <h2 className={`flex h-4 items-center pb-px pl-1 font-bold text-[#2b2b2b] ${className}`}>{children}</h2>;
}

function IconGrid({ names, rows }: { names: (string | null)[]; rows: 1 | 2 }) {
  return (
    <div className={`ml-[14px] grid w-[171px] grid-cols-6 ${rows === 2 ? "h-[57px] grid-rows-2" : "h-7"}`}>
      {names.map((name, i) =>
        name ? (
          <button key={i} aria-label={name} className="flex items-center justify-center">
            <Icon name={name} className="size-[14px]" />
          </button>
        ) : (
          <span key={i} />
        ),
      )}
    </div>
  );
}

function AlignPanel() {
  return (
    <aside className="mt-1 mr-1 mb-[3px] flex w-[253px] shrink-0 flex-col bg-white">
      <div className="flex h-[31px] shrink-0 bg-[#e0ddda]">
        <button aria-label="Fill and stroke" className="flex w-[61px] items-center justify-center">
          <Icon name="fillStroke" className="size-[14px]" />
        </button>
        <div className="flex w-12 items-center justify-center gap-1 border-b-[3px] border-[#3584cf] bg-[#f1efed] pr-1">
          <Icon name="align" />
          <button aria-label="Close tab">
            <svg viewBox="0 0 8 8" className="size-2">
              <path d="M1 1L7 7M7 1L1 7" stroke="#777" strokeWidth="1.500" />
            </svg>
          </button>
        </div>
        <button aria-label="Transform" className="flex flex-1 items-center justify-center">
          <Icon name="transform" />
        </button>
        <button aria-label="Objects" className="flex w-11 items-center justify-center">
          <Icon name="offset" />
        </button>
        <span className="w-3" />
        <button aria-label="More dialogs" className="flex w-[26px] items-center justify-center bg-[#edebe9]">
          <Icon name="chevDown" className="size-[13px]" />
        </button>
      </div>
      <div className="mt-px flex flex-col border border-[#d3d0cc]">
        <div className="flex h-6 items-stretch bg-[#e0ddda] pl-1.5">
          <button className="flex w-[52px] items-center gap-1 border-b-[3px] border-[#3584cf] pt-[3px] pl-[7px]">
            <Icon name="align" className="size-3" />
            Align
          </button>
          <button className="ml-[14px] flex items-center gap-1">
            <Icon name="grid" className="size-3" />
            Grid
          </button>
          <button className="ml-[18px] flex items-center gap-1">
            <Icon name="circular" className="size-3" />
            Circular
          </button>
        </div>
        <Heading>Align</Heading>
        <button className="mt-px flex h-7 items-center gap-[11px] pl-[21px]">
          <Icon name="handles" className="size-[14px]" />
          Alignment handles with third click
        </button>
        <button className="flex h-[29px] items-center gap-[11px] pl-[21px]">
          <Icon name="asGroup" className="size-[14px]" />
          Move/align selection as group
        </button>
        <div className="flex h-7 items-center pl-[13px]">
          <label htmlFor="relative" className="w-[52px] whitespace-nowrap">
            Relative to:
          </label>
          <div className="relative h-7 w-[92px]">
            <select
              id="relative"
              className="h-7 w-full appearance-none rounded-[4px] border border-[#cdc9c5] bg-linear-to-b from-[#f8f7f6] to-[#efedec] pl-[5px]"
            >
              <option>Last selected</option>
            </select>
            <svg viewBox="0 0 10 6" className="pointer-events-none absolute top-[11px] right-1.5 h-1.5 w-2.5">
              <path d="M0 0H10L5 6Z" fill={DARK} />
            </svg>
          </div>
        </div>
        <div className="pt-px">
          <IconGrid
            rows={2}
            names={["aRightOut", "aLeft", "aCenterV", "aRight", "aLeftOut", "aTextV", "aTopOut", "aTop", "aMiddle", "aBottom", "aBottomOut", "aTextH"]}
          />
        </div>
        <Heading className="mt-[7px]">Distribute</Heading>
        <div className="pt-px">
          <IconGrid rows={2} names={["dLeft", "dCenter", "dRight", "dGapH", "dTextH", null, "dTop", "dMiddle", "dBottom", "dGapV", "dTextV", null]} />
        </div>
        <Heading className="mt-2">Rearrange</Heading>
        <IconGrid rows={1} names={["rGraph", "rSwap", "rSwapZ", "rSwapC", "rRandom", "rUnclump"]} />
        <Heading className="mt-[9px]">Remove overlaps</Heading>
        <div className="flex items-center pl-[13px]">
          <Spin id="gap-h" label="H" value="0" width="w-[74px]" button="w-[21px]" labelWidth="w-[11px]" split="border-l border-[#ececec]" />
          <span className="w-[3px]" />
          <Spin id="gap-v" label="V" value="0" width="w-[74px]" button="w-[21px]" labelWidth="w-[9px]" split="border-l border-[#ececec]" />
          <button aria-label="Remove overlaps" className="ml-[9px]">
            <Icon name="overlaps" />
          </button>
        </div>
      </div>
    </aside>
  );
}

const swatches = [
  "bg-black", "bg-[#0000ff]", "bg-[#006400]", "bg-[#0066ff]", "bg-[#00ff00]", "bg-[#00ffff]", "bg-[#640000]",
  "bg-[#6600ff]", "bg-[#66ff00]", "bg-[#ee0000]", "bg-[#ff00ff]", "bg-[#ff6600]", "bg-[#ffff00]",
];

function Palette() {
  return (
    <div className="flex h-[31px] shrink-0 items-end">
      <button aria-label="No paint" className="mb-0.5 size-[26px] bg-white">
        <svg viewBox="0 0 26 26" className="size-full">
          <path d="M1 1L25 25M25 1L1 25" stroke="#9c2f3f" strokeWidth="2" />
          <path d="M10 13L13 10L16 13L13 16Z" fill="#7a4a50" />
        </svg>
      </button>
      <div className="mb-0.5 ml-0.5 grid h-[13px] w-[185px] grid-cols-13 gap-px">
        {swatches.map((color, i) => (
          <button key={color} aria-label={`Swatch ${i + 1}`} className={`flex items-center justify-center ${color}`}>
            {i === 9 && <span className="size-2 rounded-full border border-[#ff9c9c]" />}
          </button>
        ))}
      </div>
      <div className="ml-auto flex items-center gap-[14px]">
        <button aria-label="Previous row" className="pb-1">
          <svg viewBox="0 0 12 8" className="h-2 w-3">
            <path d="M1 7L6 2L11 7" fill="none" stroke={DARK} strokeWidth="1.800" />
          </svg>
        </button>
        <button aria-label="Next row" className="pb-1">
          <svg viewBox="0 0 12 8" className="h-2 w-3">
            <path d="M1 1L6 6L11 1" fill="none" stroke={DARK} strokeWidth="1.800" />
          </svg>
        </button>
        <button aria-label="Palette menu" className="-ml-1.5 mr-px flex h-[23px] w-[17px] items-center justify-center rounded-[4px] border border-[#cdc9c5]">
          <svg viewBox="0 0 12 12" className="size-3">
            <path d="M0 2H12M0 6H12M0 10H12" stroke={DARK} strokeWidth="1.500" />
          </svg>
        </button>
      </div>
    </div>
  );
}

function StatusBar() {
  return (
    <footer className="flex h-[27px] shrink-0 items-start">
      <div className="grid w-[128px] shrink-0 grid-cols-[41px_41px_1fr] gap-x-[3px]">
        <span className="text-right leading-[15px] whitespace-nowrap">
          Fill: <b>m</b>
        </span>
        <span className="text-center leading-[15px] italic">None</span>
        <span />
        <span className="text-right leading-[14px] whitespace-nowrap">
          Stroke: <b>m</b>
        </span>
        <span className="h-[14px] bg-[#ff0000]" />
        <span className="leading-[14px]">0.00700</span>
      </div>
      <Spin id="opacity" label="O" value="100" width="w-[59px]" button="w-[15px]" labelWidth="w-[10px]" split="border-l border-[#f0f0f0]" plus="#c8c8c8" />
      <div className="ml-5 flex h-7 items-center">
        <span className="h-[14px] w-0.5 bg-[#5b8fc9]" />
        <button className="w-[53px] pl-[5px] text-left whitespace-nowrap">Layer 1</button>
        <button aria-label="Toggle layer visibility" className="w-[31px]">
          <Icon name="eye" />
        </button>
        <button aria-label="Toggle layer lock" className="w-7">
          <Icon name="lockOpen" className="size-[13px]" />
        </button>
      </div>
      <p className="flex-1 truncate leading-7">
        <b>2</b> objects selected of type <b>Path</b> in layer <b>Layer 1</b>. Click selection again to toggle scale/rotation handles.
      </p>
      <div className="mr-2.5 flex shrink-0 border-l border-[#dedbd8]">
        <div className="grid w-[54px] grid-cols-[20px_1fr] pl-2 leading-[14px] text-[#4b4b4b]">
          <span>X:</span>
          <span className="text-right">12.88</span>
          <span>Y:</span>
          <span className="text-right">9.76</span>
        </div>
        <div className="ml-[7px]">
          <Spin id="zoom" label="Z" value="51%" width="w-[73px]" button="w-[18px]" input="pl-2" labelWidth="w-[9px]" split="border-l border-[#ececec]" />
        </div>
        <div className="ml-2.5">
          <Spin id="rotation" label="R" value="0.00°" width="w-[78px]" button="w-[18px]" input="pl-2.5" labelWidth="w-[9px]" split="border-l border-[#ececec]" />
        </div>
      </div>
    </footer>
  );
}

const toggles = ["scaleStroke", "scaleRadii", "scaleGradient", "scalePattern"];

export default function App() {
  return (
    <div className="h-screen bg-black px-[42px] font-['Lato','Noto_Sans',sans-serif] text-[10px] leading-[14px] text-[#2e2e2e]">
      <div className="flex h-full flex-col overflow-hidden bg-[#f6f5f3]">
        <header className="flex h-6 shrink-0 items-center bg-[#1b5c1e] pb-px text-white">
          <svg viewBox="0 0 16 16" className="mx-[5px] size-[14px]" aria-hidden="true">
            <path d="M8 1L15 8Q16 10 13 11L11 12L12 14H5L4 12L1 10Q0 9 1 8Z" fill="#101418" />
            <path d="M8 2L11.500 6L9.500 5.500L8 7L6.500 5.500L4.500 6Z" fill="#e4eaee" />
          </svg>
          <h1>*New document 1 - Inkscape</h1>
          <div className="mr-px ml-auto flex">
            {["M1 6H11", "M2 2H10V10H2Z", "M2 2L10 10M10 2L2 10"].map((d, i) => (
              <button key={d} aria-label={["Minimize", "Maximize", "Close"][i]} className="flex w-[38px] justify-center">
                <svg viewBox="0 0 12 12" className="size-[11px]">
                  <path d={d} fill="none" stroke="#d5ead5" strokeWidth="1.200" />
                </svg>
              </button>
            ))}
          </div>
        </header>
        <nav className="flex h-[21px] shrink-0 items-center gap-[13px] border-b border-[#e6e4e1] pl-[5px]">
          {["File", "Edit", "View", "Layer", "Object", "Path", "Text", "Filters", "Extensions", "Help"].map((item) => (
            <button key={item}>{item}</button>
          ))}
        </nav>
        <div className="flex h-9 shrink-0 items-center pl-px">
          <ToolbarGroups groups={commandGroups} />
          <button aria-label="Snapping" className="ml-auto flex w-8 items-center justify-center">
            <Icon name="snap" />
          </button>
          <button aria-label="Collapse snapping" className="mr-1 flex h-7 w-[30px] items-center justify-center rounded-[4px] border border-[#d3cfcb]">
            <svg viewBox="0 0 6 10" className="h-2.5 w-1.5">
              <path d="M6 0V10L0 5Z" fill={DARK} />
            </svg>
          </button>
        </div>
        <div className="flex h-[35px] shrink-0 items-center pb-px pl-px">
          <ToolbarGroups groups={controlGroups} />
          <Divider />
          <div className="flex items-center gap-1.5 pl-0.5">
            <Spin id="x" label="X" value="4.165" width="w-[92px]" button="w-[14px]" />
            <Spin id="y" label="Y" value="3.438" width="w-[92px]" button="w-[14px]" />
            <Spin id="w" label="W" value="7.893" width="w-[88px]" button="w-[14px]" labelWidth="w-[13px]" />
          </div>
          <button aria-label="Lock ratio" className="flex w-[37px] justify-center">
            <Icon name="lockOpen" className="size-[14px]" />
          </button>
          <Spin id="h" label="H" value="3.632" width="w-[88px]" button="w-[14px]" labelWidth="w-[13px]" />
          <div className="relative ml-[3px] h-7 w-[50px]">
            <select aria-label="Unit" className="size-full appearance-none rounded-[4px] border border-[#d3cfcb] bg-[#f8f7f6] pl-[9px]">
              <option>in</option>
            </select>
            <svg viewBox="0 0 10 6" className="pointer-events-none absolute top-[11px] right-[9px] h-1.5 w-2.5">
              <path d="M0 0H10L5 6Z" fill={DARK} />
            </svg>
          </div>
          <Divider />
          <div className="flex gap-px">
            {toggles.map((name, i) => (
              <button
                key={name}
                aria-label={name}
                className={`flex h-7 w-[30px] items-center justify-center rounded-[4px] ${i > 0 ? "bg-[#d5d1cd]" : ""}`}
              >
                <Icon name={name} />
              </button>
            ))}
          </div>
        </div>
        <main className="flex min-h-0 flex-1">
          <Toolbox />
          <div className="ml-[3px] grid min-w-0 flex-1 grid-cols-[16px_1fr] grid-rows-[17px_1fr] overflow-hidden">
            <button aria-label="Lock guides" className="flex items-center">
              <Icon name="lock" className="size-[13px]" />
            </button>
            <div className="min-w-0 overflow-hidden pt-px">
              <Ruler origin={96} pageEnd={789} from={-2.5} to={22.5} selection={[240, 515]} marker={543} />
            </div>
            <div className="min-h-0 overflow-hidden">
              <Ruler vertical origin={57} pageEnd={472} from={-1.5} to={13.5} selection={[176, 302]} marker={395} />
            </div>
            <div className="min-h-0 min-w-0 overflow-hidden">
              <Canvas />
            </div>
          </div>
          <div className="flex w-[11px] shrink-0 flex-col items-center justify-center gap-0.5">
            {[0, 1, 2].map((n) => (
              <span key={n} className="size-[3px] rounded-full bg-[#2b2b2b]" />
            ))}
          </div>
          <AlignPanel />
        </main>
        <Palette />
        <StatusBar />
      </div>
    </div>
  );
}
